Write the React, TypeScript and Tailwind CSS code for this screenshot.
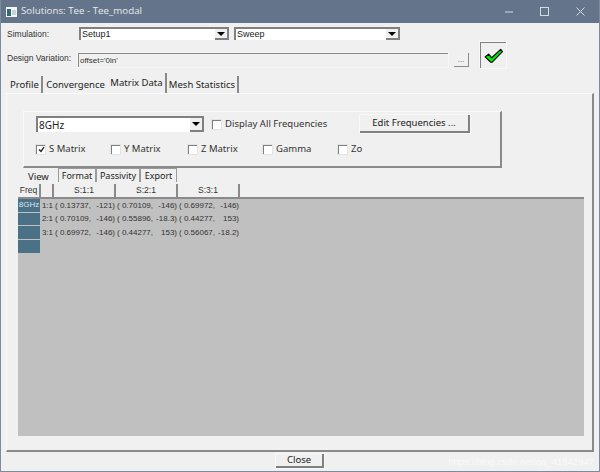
import React from "react";

const uiFont = "font-['Noto_Sans','Open_Sans',sans-serif]";

const Arrow = () => (
  <span className="flex h-full w-[14px] shrink-0 items-center justify-center border-r-2 border-b-2 border-[#808080] bg-[#f0f0f0]">
    <span className="h-0 w-0 border-x-[4px] border-t-[4px] border-x-transparent border-t-black" />
  </span>
);

const Select = ({ text, className }: { text: string; className: string }) => (
  <div className={`flex items-center border-t-2 border-l-2 border-[#808080] bg-white ${className}`}>
    <span className="flex-1 pl-[1px] text-[9px] text-[#222] font-['Liberation_Sans',sans-serif]">{text}</span>
    <Arrow />
  </div>
);

const Check = ({ label, checked, className }: { label: string; checked?: boolean; className: string }) => (
  <div className={`flex items-center gap-[4px] ${className}`}>
    <span className="flex h-[9px] w-[9px] items-center justify-center border-t border-l border-[#808080] bg-white outline outline-1 outline-[#e4e4e4]">
      {checked && (
        <svg width="7" height="7" viewBox="0 0 7 7">
          <path d="M1 3.5 L3 5.5 L6 1.2" fill="none" stroke="#222" strokeWidth="1.4" />
        </svg>
      )}
    </span>
    <span className="whitespace-nowrap text-[9.5px] leading-none text-[#333]">{label}</span>
  </div>
);

const Tab = ({ label, w, active, bare }: { label: string; w: string; active?: boolean; bare?: boolean }) => (
  <div
    className={`flex items-center justify-center whitespace-nowrap text-[9.5px] text-[#222] ${w} ${
      bare ? "" : "border-r-2 border-[#8a8a8a]"
    } ${active ? "h-[20px] self-end" : "h-[17px] self-end pt-[1px]"}`}
  >
    {label}
  </div>
);

const SubTab = ({ label, w }: { label: string; w: string }) => (
  <div className={`flex h-[14px] items-center justify-center whitespace-nowrap border-t border-l border-r border-[#9a9a9a] text-[9px] leading-none text-[#222] ${w}`}>
    {label}
  </div>
);

const HeadCell = ({ label, w }: { label: string; w: string }) => (
  <div className={`flex h-full items-center justify-center border-r-2 border-[#8a8a8a] bg-[#f0f0f0] text-[8.5px] text-[#333] font-['Liberation_Sans',sans-serif] ${w}`}>
    {label}
  </div>
);

const rows = [
  { id: "1:1", vals: [["( 0.13737,", "-121)"], ["( 0.70109,", "-146)"], ["( 0.69972,", "-146)"]] },
  { id: "2:1", vals: [["( 0.70109,", "-146)"], ["( 0.55896,", "-18.3)"], ["( 0.44277,", "153)"]] },
  { id: "3:1", vals: [["( 0.69972,", "-146)"], ["( 0.44277,", "153)"], ["( 0.56067,", "-18.2)"]] },
];

const App = () => {
  return (
    <div className={`flex h-[472px] w-[600px] flex-col overflow-hidden border-x border-b border-[#7f8b9b] bg-[#f0f0f0] ${uiFont}`}>
      {/* title bar */}
      <div className="flex h-[23px] shrink-0 items-center bg-[#64748a] pl-[5px] text-[#e8ebef]">
        <svg width="11" height="10" viewBox="0 0 11 10" className="shrink-0">
          <rect width="11" height="10" fill="#f2f4f6" />
          <rect x="1" y="2" width="4" height="7" fill="#2d6f6f" />
          <rect x="6" y="3" width="4" height="5" fill="#c9d3dd" />
        </svg>
        <span className="ml-[4px] flex-1 whitespace-nowrap text-[9.75px] font-['Open_Sans',sans-serif]">Solutions: Tee - Tee_modal</span>
        <div className="flex items-center gap-[27px] pr-[14px]">
          <svg width="8" height="2" viewBox="0 0 8 2"><path d="M0 1 H8" stroke="#d5dbe2" strokeWidth="1" /></svg>
          <svg width="9" height="9" viewBox="0 0 9 9"><rect x="0.5" y="0.5" width="8" height="8" fill="none" stroke="#d5dbe2" /></svg>
          <svg width="9" height="9" viewBox="0 0 9 9"><path d="M0.5 0.5 L8.5 8.5 M8.5 0.5 L0.5 8.5" stroke="#d5dbe2" /></svg>
        </div>
      </div>

      {/* simulation row */}
      <div className="mt-[4px] flex h-[13px] shrink-0 items-center pl-[6px] text-[8.5px] text-[#333] font-['Liberation_Sans',sans-serif]">
        <span className="w-[72px] pt-[2px]">Simulation:</span>
        <Select text="Setup1" className="h-[13px] w-[150px]" />
        <Select text="Sweep" className="ml-[5px] h-[13px] w-[166px]" />
      </div>

      {/* design variation row */}
      <div className="mt-[1px] flex h-[27px] shrink-0 items-end pl-[6px] text-[8.5px] text-[#333] font-['Liberation_Sans',sans-serif]">
        <span className="mb-[3px] w-[71px] whitespace-nowrap">Design Variation:</span>
        <div className="mb-[1px] flex h-[14px] w-[370px] items-center border-t border-l border-[#8a8a8a] pl-[1px] text-[8px] outline outline-1 outline-[#f6f6f6]">
          offset='0in'
        </div>
        <div className="mb-[1px] ml-[6px] flex h-[14px] w-[15px] items-center justify-center border-r border-b border-[#8a8a8a] text-[8px] text-[#555]">...</div>
        <div className="ml-[11px] flex h-[26px] w-[26px] items-center justify-center border-t border-l border-[#808080] outline outline-1 outline-[#f8f8f8]">
          <svg width="20" height="16" viewBox="0 0 22 18">
            <path d="M1 10 L5 7 L8.5 11 L18.5 1.5 L20.5 4 L9 16 L7.5 16 Z" fill="#00ee00" stroke="#000" strokeWidth="1.3" strokeLinejoin="round" />
          </svg>
        </div>
      </div>

      {/* main tabs */}
      <div className="mt-[5px] flex h-[20px] shrink-0 pl-[7px]">
        <Tab label="Profile" w="w-[35px]" />
        <Tab label="Convergence" w="w-[65px]" bare />
        <Tab label="Matrix Data" w="w-[59px]" active />
        <Tab label="Mesh Statistics" w="w-[72px]" />
      </div>

      {/* tab panel */}
      <div className="ml-[5px] mr-[5px] flex h-[359px] shrink-0 flex-col border-t border-r-2 border-b-2 border-l border-t-[#fafafa] border-l-[#fafafa] border-r-[#8a8a8a] border-b-[#8a8a8a]">
        {/* group box */}
        <div className="ml-[16px] mt-[17px] flex h-[57px] w-[479px] shrink-0 flex-col border-t border-r-2 border-b-2 border-l border-t-[#fafafa] border-l-[#fafafa] border-r-[#8a8a8a] border-b-[#8a8a8a] pl-[12px]">
          <div className="mt-[3px] flex h-[18px] items-center">
            <div className="flex h-[16px] w-[168px] items-center border-t-2 border-l-2 border-[#808080] bg-white">
              <span className="flex-1 pl-[1px] text-[10px] text-[#222]">8GHz</span>
              <Arrow />
            </div>
            <Check label="Display All Frequencies" className="ml-[8px] w-[148px]" />
            <div className="flex h-[18px] w-[110px] items-center justify-center whitespace-nowrap border-r-2 border-b-2 border-[#808080] pt-[1px] text-[9.5px] text-[#222] outline outline-1 outline-[#f8f8f8]">
              Edit Frequencies ...
            </div>
          </div>
          <div className="mt-[10px] flex h-[12px] items-center">
            <Check label="S Matrix" checked className="w-[75px]" />
            <Check label="Y Matrix" className="w-[77px]" />
            <Check label="Z Matrix" className="w-[75px]" />
            <Check label="Gamma" className="w-[75px]" />
            <Check label="Zo" className="w-[60px]" />
          </div>
        </div>

        {/* sub tabs */}
        <div className="ml-[21px] flex h-[14px] shrink-0 items-end">
          <div className="flex h-[11px] w-[30px] items-center text-[9.5px] leading-none text-[#222]">View</div>
          <SubTab label="Format" w="w-[38px]" />
          <SubTab label="Passivity" w="w-[44px]" />
          <SubTab label="Export" w="w-[37px]" />
        </div>

        {/* grid */}
        <div className="ml-[11px] mt-[2px] flex h-[252px] w-[566px] flex-col bg-[#c0c0c0] font-['Liberation_Sans',sans-serif]">
          <div className="flex h-[15px] shrink-0 border-b-2 border-[#8a8a8a] bg-[#f0f0f0]">
            <HeadCell label="Freq" w="w-[23px]" />
            <HeadCell label="" w="w-[13px]" />
            <HeadCell label="S:1:1" w="w-[62px]" />
            <HeadCell label="S:2:1" w="w-[62px]" />
            <HeadCell label="S:3:1" w="w-[62px]" />
          </div>
          {rows.map((row, i) => (
            <div key={row.id} className="flex h-[13.5px] shrink-0 text-[8px] leading-none text-[#333]">
              <div className="flex w-[22px] items-center justify-center border-b border-[#c0c0c0] bg-[#4a7186] text-[#d9e3e8]">
                {i === 0 ? "8GHz" : ""}
              </div>
              <span className="flex w-[14px] items-center justify-end pr-[1px]">{row.id}</span>
              {row.vals.map((v, j) => (
                <div key={j} className="flex w-[62px] items-center justify-between whitespace-nowrap px-[1px]">
                  <span>{v[0]}</span>
                  <span>{v[1]}</span>
                </div>
              ))}
            </div>
          ))}
          <div className="h-[13px] w-[22px] shrink-0 bg-[#4a7186]" />
        </div>
      </div>

      {/* bottom bar */}
      <div className="relative flex flex-1 items-center justify-center">
        <div className="mb-[1px] flex h-[14px] w-[48px] items-center justify-center border-r-2 border-b-2 border-[#808080] text-[9.5px] text-[#222] outline outline-1 outline-[#f8f8f8]">
          Close
        </div>
        <span className="absolute right-[5px] top-[3px] whitespace-nowrap text-[9.5px] text-[#f9f9f9] font-['Liberation_Sans',sans-serif]">
          https://blog.csdn.net/qq_41542947
        </span>
      </div>
    </div>
  );
};

export default App;
